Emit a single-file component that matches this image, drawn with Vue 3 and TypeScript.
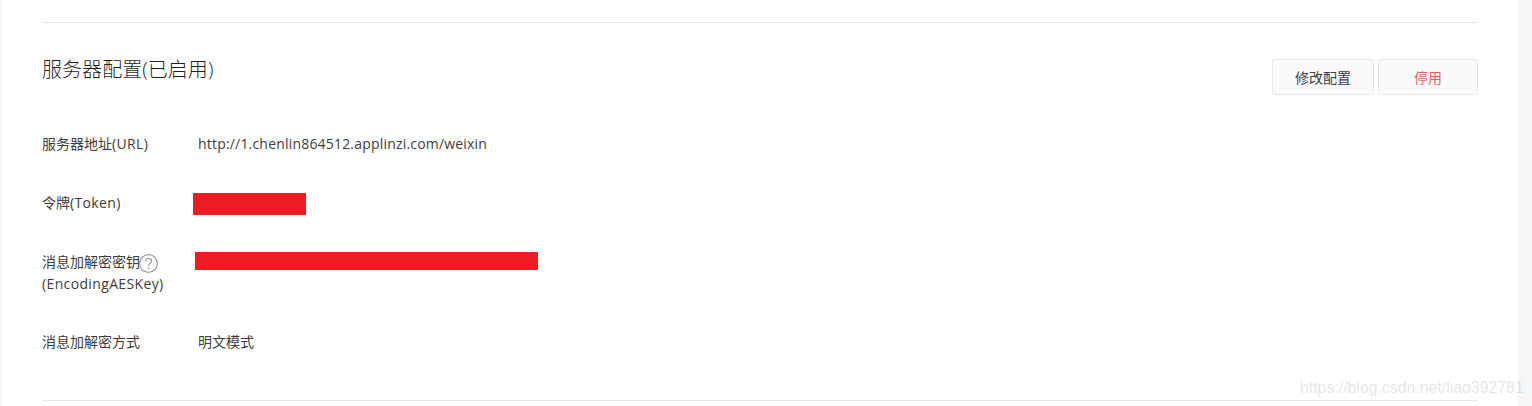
<script setup lang="ts">
interface Row { label: string; latin?: string; value?: string; isLatinValue?: boolean; redact?: 'token' | 'key'; help?: boolean; sub?: string }
const rows: Row[] = [
  { label: '服务器地址', latin: '(URL)', value: 'http://1.chenlin864512.applinzi.com/weixin', isLatinValue: true },
  { label: '令牌', latin: '(Token)', redact: 'token' },
  { label: '消息加解密密钥', sub: '(EncodingAESKey)', help: true, redact: 'key' },
  { label: '消息加解密方式', value: '明文模式' },
]
</script>

<template>
  <div class="page">
    <main class="card">
      <section class="section">
        <header class="head">
          <h2 class="title">服务器配置(已启用)</h2>
          <div class="actions">
            <button class="btn btn-edit" type="button">修改配置</button>
            <button class="btn btn-stop" type="button">停用</button>
          </div>
        </header>
        <div class="rows">
          <div v-for="row in rows" :key="row.label" class="row" :class="{ 'row-tall': row.sub }">
            <div class="label">
              <div class="label-line">
                {{ row.label }}<span v-if="row.latin" class="latin">{{ row.latin }}</span>
                <svg v-if="row.help" class="help" viewBox="0 0 18 18" aria-hidden="true">
                  <circle cx="9" cy="9" r="8.4" fill="none" stroke="#a0a0a0" stroke-width="1.2" />
                  <path d="M6.2 7.1c0-1.8 1.3-2.9 2.9-2.9s2.8 1 2.8 2.5c0 2.1-2.8 2.2-2.8 4.5" fill="none" stroke="#a0a0a0" stroke-width="1.2" />
                  <circle cx="9.1" cy="13.6" r=".9" fill="#a0a0a0" />
                </svg>
              </div>
              <div v-if="row.sub" class="label-line latin">{{ row.sub }}</div>
            </div>
            <div v-if="row.value" class="value" :class="{ 'value-latin': row.isLatinValue }">{{ row.value }}</div>
            <div v-else class="redact" :class="row.redact === 'token' ? 'redact-token' : 'redact-key'"></div>
          </div>
        </div>
      </section>
    </main>
    <div class="watermark">https://blog.csdn.net/liao392781</div>
  </div>
</template>

<style>
html, body { margin: 0; padding: 0; background: #f5f6f8; }
</style>

<style scoped>
.page {
  position: relative;
  width: 1532px;
  height: 406px;
  overflow: hidden;
  background: #f5f6f8;
  padding: 0 14px 0 2px;
  box-sizing: border-box;
  font-family: "Open Sans", "Noto Sans CJK SC", sans-serif;
  color: #3d3d3d;
}
.card {
  height: 406px;
  background: #fff;
  padding: 22px 40px 0;
  box-sizing: border-box;
}
.section {
  height: 377px;
  border-top: 1px solid #e7e7eb;
  border-bottom: 1px solid #e7e7eb;
  box-sizing: content-box;
}
.head {
  display: flex;
  justify-content: space-between;
  align-items: flex-start;
  padding-top: 36px;
}
.title {
  margin: 0;
  font-size: 20px;
  font-weight: 300;
  line-height: 22px;
  letter-spacing: 0.05px;
  color: #1f1f1f;
}
.actions { display: flex; gap: 4px; }
.btn {
  height: 36px;
  padding: 0;
  border: 1px solid #e7e7eb;
  border-radius: 3px;
  background: #fafafa;
  font: inherit;
  font-size: 14px;
}
.btn-edit { width: 102px; color: #3d3d3d; }
.btn-stop { width: 100px; color: #e15f63; }
.rows { padding-top: 38px; }
.row {
  display: flex;
  align-items: flex-start;
  height: 59px;
  font-size: 14px;
  line-height: 22px;
}
.row-tall { height: 80px; }
.label { width: 156px; flex: none; }
.label-line { display: flex; align-items: center; }
.latin { letter-spacing: 0.36px; }
.value { white-space: nowrap; }
.value-latin { letter-spacing: 0.19px; }
.help { width: 19px; height: 19px; margin: 3px 0 0 -1px; }
.redact { background: #ed1c24; }
.redact-token { width: 113px; height: 22px; margin: 1px 0 0 -5px; }
.redact-key { width: 343px; height: 18px; margin: 1px 0 0 -3px; }
.watermark {
  position: absolute;
  left: 1300px;
  top: 377px;
  font-family: "Liberation Sans", sans-serif;
  font-size: 15.85px;
  line-height: 22px;
  white-space: nowrap;
  color: rgba(120, 120, 120, 0.2);
}
</style>
